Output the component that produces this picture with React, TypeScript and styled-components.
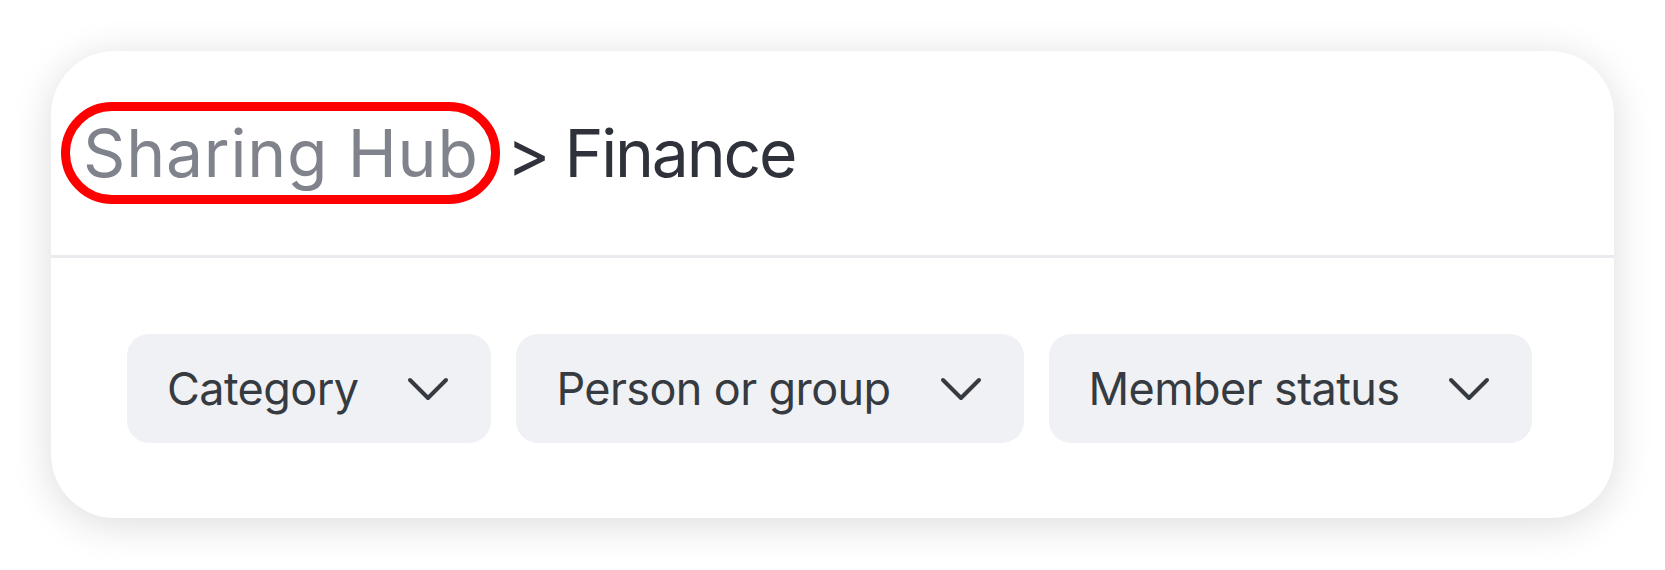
import React from 'react';
import styled, { createGlobalStyle } from 'styled-components';

const filters = ['Category', 'Person or group', 'Member status'];

export default function App() {
  return (
    <>
      <GlobalStyle />
      <StPage>
        <StCard>
          <StHeader>
            <StCrumb>Sharing Hub</StCrumb>
            <StCurrent>&gt; Finance</StCurrent>
          </StHeader>
          <StFilters>
            {filters.map((label) => (
              <StFilterButton key={label}>
                <span>{label}</span>
                <Chevron />
              </StFilterButton>
            ))}
          </StFilters>
        </StCard>
      </StPage>
    </>
  );
}

function Chevron() {
  return (
    <svg width="42" height="24" viewBox="0 0 42 24" fill="none">
      <polyline
        points="3,3 21,21 39,3"
        stroke="#363a41"
        strokeWidth="4"
        strokeLinecap="round"
        strokeLinejoin="round"
      />
    </svg>
  );
}

const GlobalStyle = createGlobalStyle`
  html, body {
    margin: 0;
    background: #ffffff;
    font-family: Inter, "Noto Sans", sans-serif;
  }
`;

const StPage = styled.div`
  min-height: 570px;
  box-sizing: border-box;
  padding: 51px 0 0 51px;
`;

const StCard = styled.div`
  width: 1563px;
  height: 467px;
  box-sizing: border-box;
  background: #ffffff;
  border-radius: 64px;
  box-shadow: 0 6px 40px rgba(0, 0, 0, 0.14);
  display: flex;
  flex-direction: column;
  overflow: hidden;
`;

const StHeader = styled.div`
  height: 204px;
  flex-shrink: 0;
  display: flex;
  align-items: center;
  padding-left: 10px;
  border-bottom: 3px solid #e9ebef;
  font-size: 66px;
`;

const StCrumb = styled.span`
  display: inline-flex;
  align-items: center;
  height: 84px;
  padding: 0 12px 0 13px;
  border: 9px solid #ff0000;
  border-radius: 52px;
  color: #80838c;
  line-height: 1;
  letter-spacing: 0.8px;
`;

const StCurrent = styled.span`
  margin-left: 7px;
  color: #2f323a;
  line-height: 1;
  letter-spacing: -2.2px;
`;

const StFilters = styled.div`
  display: flex;
  gap: 25px;
  padding: 76px 0 0 76px;
`;

const StFilterButton = styled.button`
  display: flex;
  align-items: center;
  gap: 49px;
  height: 109px;
  padding: 0 42px 0 40px;
  border: none;
  border-radius: 22px;
  background: #f0f1f4;
  color: #363a41;
  font-family: Inter, "Noto Sans", sans-serif;
  font-size: 45px;
  letter-spacing: -0.6px;
  cursor: pointer;
`;
